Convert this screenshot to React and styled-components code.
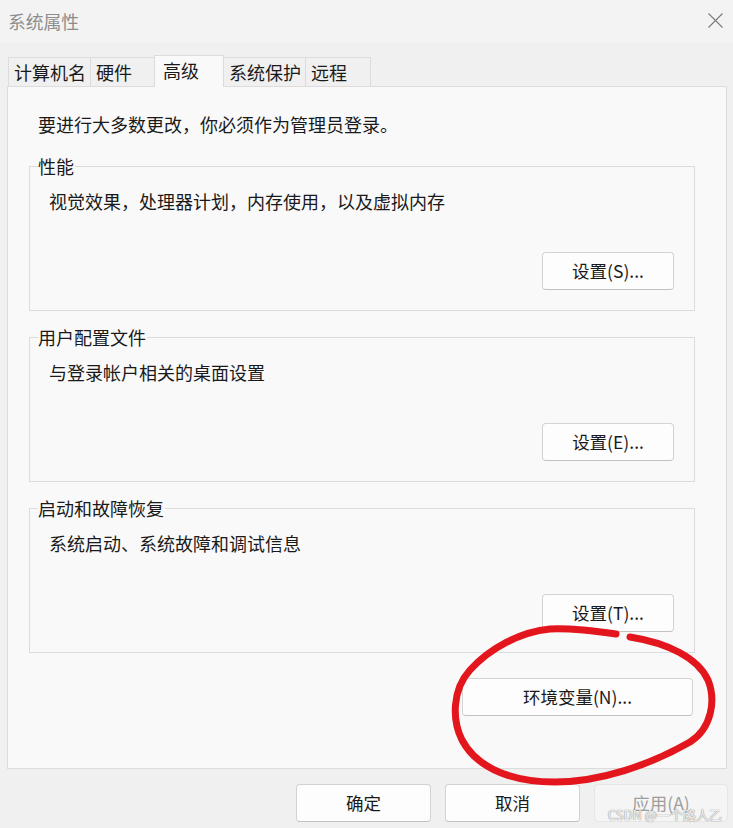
import React from "react";
import styled, { createGlobalStyle } from "styled-components";

const Global = createGlobalStyle`
  html, body { margin: 0; padding: 0; background: #f0f0f0; }
  body { font-family: "Noto Sans CJK SC", "Liberation Sans", sans-serif; }
  * { box-sizing: border-box; }
`;

const Window = styled.div`
  position: relative;
  width: 733px;
  height: 828px;
  overflow: hidden;
  background: #f0f0f0;
  font-family: "Noto Sans CJK SC", "Liberation Sans", sans-serif;
  font-size: 18px;
  color: #1a1a1a;
`;

const TitleBar = styled.div`
  height: 43px;
  background: #f3f3f3;
  display: flex;
  align-items: center;
  justify-content: space-between;
  padding: 0 10px 0 8px;
`;

const Title = styled.div`
  color: #8d8d8d;
  font-size: 17.8px;
  line-height: 24px;
  margin-top: -2px;
`;

const CloseBtn = styled.div`
  width: 15px;
  height: 15px;
  display: flex;
  margin-top: -2px;
`;

const TabStrip = styled.div`
  display: flex;
  align-items: flex-end;
  height: 32px;
  margin-top: 12px;
  margin-bottom: -1px;
  padding-left: 8px;
  position: relative;
  z-index: 1;
`;

const Tab = styled.div`
  min-width: ${(p) => (p.$active ? "70px" : "66px")};
  height: ${(p) => (p.$active ? "32px" : "30px")};
  padding: ${(p) => (p.$active ? "2px 8px 0 8px" : "0 4px 0 5px")};
  margin: ${(p) => (p.$active ? "0 -1px 0 -1px" : "0 -1px 0 0")};
  border: 1px solid #dcdcdc;
  border-bottom: ${(p) => (p.$active ? "none" : "1px solid #dcdcdc")};
  background: ${(p) => (p.$active ? "#f9f9f9" : "#f0f0f0")};
  position: relative;
  z-index: ${(p) => (p.$active ? 2 : 0)};
  display: flex;
  align-items: ${(p) => (p.$active ? "flex-start" : "center")};
  line-height: 24px;
  white-space: nowrap;
`;

const Panel = styled.div`
  margin: 0 6px 0 7px;
  height: 683px;
  border: 1px solid #dcdcdc;
  background: #f9f9f9;
  padding: 25px 31px 0 21px;
  display: flex;
  flex-direction: column;
`;

const Intro = styled.div`
  line-height: 24px;
  margin-left: 9px;
  margin-bottom: 18px;
`;

const Group = styled.fieldset`
  margin: 0 0 14px 0;
  padding: 10px 20px 20px 8px;
  border: 1px solid #dcdcdc;
  min-width: 0;
  display: flex;
  flex-direction: column;
`;

const Legend = styled.legend`
  padding: 0 1px 0 0;
  line-height: 25px;
  font-size: 18px;
  margin-top: -1px;
`;

const Desc = styled.div`
  line-height: 24px;
  margin-left: 11px;
  margin-bottom: 39px;
`;

const Button = styled.button`
  font-family: inherit;
  font-size: 17.5px;
  color: ${(p) => (p.disabled ? "#9e9e9e" : "#1a1a1a")};
  width: ${(p) => p.$w || 132}px;
  height: 38px;
  border: 1px solid ${(p) => (p.disabled ? "#e6e6e6" : "#d3d3d3")};
  border-bottom-color: ${(p) => (p.disabled ? "#e6e6e6" : "#c2c2c2")};
  border-radius: 4px;
  background: ${(p) => (p.disabled ? "#f5f5f5" : "#fdfdfd")};
  padding: 0;
  line-height: 24px;
  align-self: ${(p) => p.$align || "auto"};
  margin-right: ${(p) => p.$mr || 0}px;
`;

const ButtonRow = styled.div`
  display: flex;
  justify-content: flex-end;
  margin-top: 11px;
`;

const Footer = styled.div`
  display: flex;
  justify-content: flex-end;
  gap: 14px;
  padding-right: 5px;
  margin-top: 15px;
`;

const Overlay = styled.svg`
  position: absolute;
  left: 0;
  top: 0;
  pointer-events: none;
  z-index: 5;
`;

const Watermark = styled.div`
  position: absolute;
  right: 11px;
  bottom: 5px;
  font-size: 13px;
  line-height: 16px;
  color: rgba(255, 255, 255, 0.9);
  text-shadow: 0 0 1px #8a8a8a, 0 0 1px #8a8a8a;
  z-index: 6;
`;

const groups = [
  { title: "性能", desc: "视觉效果，处理器计划，内存使用，以及虚拟内存", btn: "设置(S)..." },
  { title: "用户配置文件", desc: "与登录帐户相关的桌面设置", btn: "设置(E)..." },
  { title: "启动和故障恢复", desc: "系统启动、系统故障和调试信息", btn: "设置(T)..." },
];

const tabs = ["计算机名", "硬件", "高级", "系统保护", "远程"];

export default function App() {
  return (
    <>
      <Global />
      <Window>
        <TitleBar>
          <Title>系统属性</Title>
          <CloseBtn>
            <svg width="15" height="15" viewBox="0 0 15 15">
              <path d="M0.5 0.5 L14.5 14.5 M14.5 0.5 L0.5 14.5" stroke="#7a7a7a" strokeWidth="1.1" />
            </svg>
          </CloseBtn>
        </TitleBar>
        <TabStrip>
          {tabs.map((t) => (
            <Tab key={t} $active={t === "高级"}>{t}</Tab>
          ))}
        </TabStrip>
        <Panel>
          <Intro>要进行大多数更改，你必须作为管理员登录。</Intro>
          {groups.map((g) => (
            <Group key={g.title}>
              <Legend>{g.title}</Legend>
              <Desc>{g.desc}</Desc>
              <Button $align="flex-end">{g.btn}</Button>
            </Group>
          ))}
          <ButtonRow>
            <Button $w={231} $mr={2}>环境变量(N)...</Button>
          </ButtonRow>
        </Panel>
        <Footer>
          <Button $w={135}>确定</Button>
          <Button $w={135}>取消</Button>
          <Button $w={134} disabled>应用(A)</Button>
        </Footer>
        <Overlay width="733" height="828" viewBox="0 0 733 828">
          <path
            d="M616,634 C595,631 570,628 550,629 C520,632 490,648 470,670 C452,690 452,720 462,740 C478,770 515,782 555,782 C600,782 650,765 690,742 C712,728 716,700 708,680 C698,658 668,643 630,637"
            fill="none"
            stroke="#e3161d"
            strokeWidth="7"
            strokeLinecap="round"
          />
        </Overlay>
        <Watermark>CSDN @一个路人乙</Watermark>
      </Window>
    </>
  );
}
